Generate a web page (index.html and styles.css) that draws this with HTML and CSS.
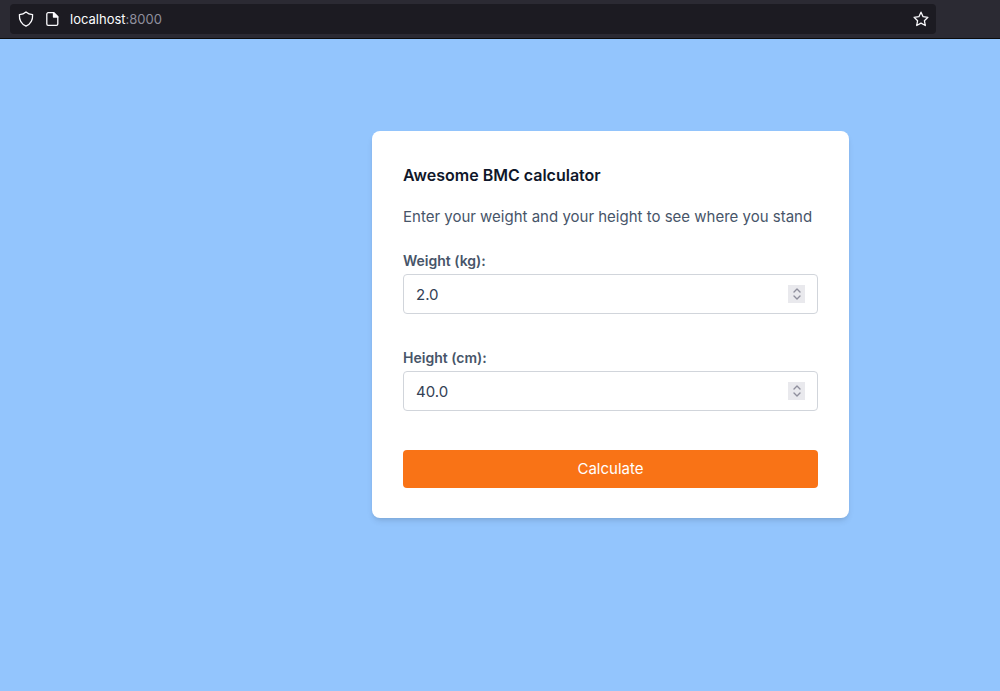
FILE: index.html
```html
<!DOCTYPE html>
<html lang="en">
<head>
    <meta charset="UTF-8">
    <meta name="viewport" content="width=device-width, initial-scale=1.0">
    <title>Awesome BMC calculator</title>
    <link rel="stylesheet" href="styles.css">
</head>
<body>
    <header class="toolbar">
        <div class="address-bar">
            <svg class="icon" viewBox="0 0 16 16" aria-hidden="true">
                <path d="M8 0.9 C6.4 2.3 4 3.3 1.4 3.6 C1.1 8.4 3.2 12.9 8 15.2 C12.8 12.9 14.9 8.4 14.6 3.6 C12 3.3 9.6 2.3 8 0.9 Z"/>
            </svg>
            <svg class="icon" viewBox="0 0 16 16" aria-hidden="true">
                <path d="M4.2 1.7 H9.8 L13.8 5.7 V13 a1.4 1.4 0 0 1-1.4 1.4 H4.2 a1.4 1.4 0 0 1-1.4-1.4 V3.1 a1.4 1.4 0 0 1 1.4-1.4 Z"/>
                <path class="fold" d="M9.5 1.7 V6 H13.8 Z"/>
            </svg>
            <div class="url">localhost<span class="port">:8000</span></div>
            <button class="bookmark" type="button" aria-label="Bookmark this page">
                <svg class="icon" viewBox="0 0 16 16" aria-hidden="true">
                    <path d="M8 1.2 L10.1 5.7 L14.9 6.3 L11.4 9.7 L12.3 14.5 L8 12.1 L3.7 14.5 L4.6 9.7 L1.1 6.3 L5.9 5.7 Z"/>
                </svg>
            </button>
        </div>
    </header>

    <main class="page">
        <section class="card">
            <h1>Awesome BMC calculator</h1>
            <p class="intro">Enter your weight and your height to see where you stand</p>

            <form>
                <div class="field">
                    <label for="weight">Weight (kg):</label>
                    <div class="number-box">
                        <input id="weight" name="weight" type="number" step="0.1" value="2.0">
                        <div class="stepper">
                            <button type="button" aria-label="Increase weight">
                                <svg viewBox="0 0 10 6" aria-hidden="true"><path d="M2 5 L5 2 L8 5"/></svg>
                            </button>
                            <button type="button" aria-label="Decrease weight">
                                <svg viewBox="0 0 10 6" aria-hidden="true"><path d="M2 1 L5 4 L8 1"/></svg>
                            </button>
                        </div>
                    </div>
                </div>

                <div class="field">
                    <label for="height">Height (cm):</label>
                    <div class="number-box">
                        <input id="height" name="height" type="number" step="0.1" value="40.0">
                        <div class="stepper">
                            <button type="button" aria-label="Increase height">
                                <svg viewBox="0 0 10 6" aria-hidden="true"><path d="M2 5 L5 2 L8 5"/></svg>
                            </button>
                            <button type="button" aria-label="Decrease height">
                                <svg viewBox="0 0 10 6" aria-hidden="true"><path d="M2 1 L5 4 L8 1"/></svg>
                            </button>
                        </div>
                    </div>
                </div>

                <button class="submit" type="submit">Calculate</button>
            </form>
        </section>
    </main>

    <script>
        document.querySelectorAll('.number-box').forEach(box => {
            const input = box.querySelector('input');
            const [up, down] = box.querySelectorAll('button');
            up.addEventListener('click', () => input.stepUp());
            down.addEventListener('click', () => input.stepDown());
        });
    </script>
</body>
</html>
```
FILE: styles.css
```css
* {
    margin: 0;
    padding: 0;
    box-sizing: border-box;
}

body {
    font-family: Inter, 'Liberation Sans', sans-serif;
    min-height: 100vh;
    background: #93c5fd;
    color: #0f172a;
}

button,
input {
    font: inherit;
    color: inherit;
    border: none;
    background: none;
}

/* browser bar */
.toolbar {
    padding: 4px 64px 4px 10px;
    background: #2b2a33;
    border-bottom: 1px solid #0c0c0d;
}

.address-bar {
    display: flex;
    align-items: center;
    gap: 10px;
    height: 30px;
    padding: 0 7px 0 8px;
    border-radius: 4px;
    background: #1c1b22;
    color: #fbfbfe;
}

.icon {
    display: block;
    width: 16px;
    height: 16px;
    fill: none;
    stroke: #fbfbfe;
    stroke-width: 1.3;
    stroke-linejoin: round;
}

.icon .fold {
    fill: #fbfbfe;
}

.url {
    flex: 1;
    font-size: 13px;
}

.port {
    color: #8f8f9d;
}

.bookmark {
    cursor: pointer;
}

/* calculator */
.page {
    padding: 92px 20px 40px 37.2%;
}

.card {
    max-width: 477px;
    padding: 31px 31px 30px;
    border-radius: 8px;
    background: #fff;
    box-shadow: 0 4px 6px -1px rgba(0,0,0,0.1), 0 2px 4px -2px rgba(0,0,0,0.1);
}

h1 {
    margin-bottom: 16px;
    font-size: 16px;
    font-weight: 600;
    line-height: 27px;
}

.intro {
    margin-bottom: 23px;
    font-size: 15px;
    line-height: 23px;
    color: #475569;
}

.field {
    margin-bottom: 34px;
}

.field label {
    display: block;
    margin-bottom: 3px;
    font-size: 14px;
    font-weight: 600;
    line-height: 20px;
    color: #475569;
}

.number-box {
    display: flex;
    align-items: center;
    height: 40px;
    padding: 0 12px;
    border: 1px solid #d1d5db;
    border-radius: 4px;
}

.number-box:focus-within {
    border-color: #60a5fa;
}

.number-box input {
    flex: 1;
    min-width: 0;
    font-size: 15px;
    line-height: 23px;
    color: #334155;
    outline: none;
    appearance: textfield;
}

.number-box input::-webkit-inner-spin-button {
    display: none;
}

.stepper {
    display: flex;
    flex-direction: column;
    justify-content: center;
    width: 17px;
    height: 18px;
    background: #e9e9ed;
}

.stepper button {
    display: flex;
    justify-content: center;
    padding: 1px 0;
}

.stepper svg {
    width: 10px;
    height: 6px;
    fill: none;
    stroke: #8f8f9d;
    stroke-width: 1.4;
    stroke-linecap: round;
    stroke-linejoin: round;
}

.submit {
    width: 100%;
    margin-top: 5px;
    border-radius: 4px;
    background: #f97316;
    font-size: 15px;
    line-height: 38px;
    color: #fff;
    cursor: pointer;
}

.submit:hover {
    background: #ea580c;
}

@media (max-width: 768px) {
    .page {
        padding: 40px 20px;
    }

    .card {
        margin: 0 auto;
    }
}
```
